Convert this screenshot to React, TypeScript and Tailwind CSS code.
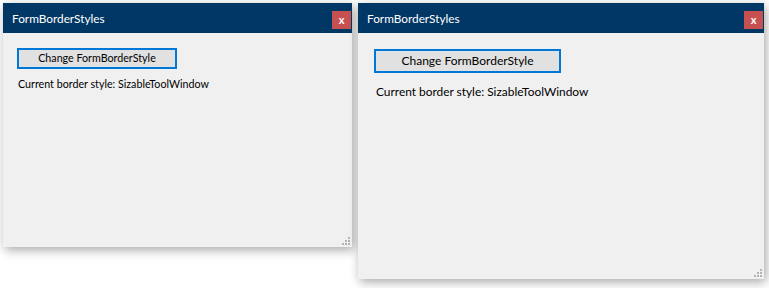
const font = { fontFamily: '"Segoe UI", Lato, "Noto Sans", sans-serif' };

type WinProps = {
  width: string;
  height: string;
  large?: boolean;
};

const Grip = () => (
  <div className="grid grid-cols-3 gap-px w-[8px] h-[8px]">
    <span />
    <span />
    <span className="bg-[#b4b4b4]" />
    <span />
    <span className="bg-[#b4b4b4]" />
    <span className="bg-[#b4b4b4]" />
    <span className="bg-[#b4b4b4]" />
    <span className="bg-[#b4b4b4]" />
    <span className="bg-[#b4b4b4]" />
  </div>
);

const ToolWindow: React.FC<WinProps> = ({ width, height, large }) => {
  return (
    <div
      className={`flex flex-col bg-[#f0f0f0] shadow-[2px_3px_10px_rgba(0,0,0,0.35)] ${width} ${height}`}
    >
      <div className="flex items-start justify-between h-[30px] bg-[#013764] pl-[9px] pr-px">
        <span className="text-white text-[11.8px] leading-[16px] mt-[8px]">FormBorderStyles</span>
        <div className="mt-[8px] w-[19px] h-[18px] bg-[#c75050] flex items-center justify-center text-white text-[11px] font-bold leading-none pb-px">
          x
        </div>
      </div>
      <div className={`flex-1 flex flex-col ${large ? "pt-[16px] pl-[16px]" : "pt-[15px] pl-[14px]"}`}>
        <button
          className={`border-2 border-[#0078d7] bg-[#e1e1e1] text-black ${
            large ? "w-[187px] h-[24px] text-[12px]" : "w-[160px] h-[21px] text-[10.7px]"
          } leading-none`}
        >
          Change FormBorderStyle
        </button>
        <p
          className={`text-black ${
            large ? "mt-[10px] ml-[2px] text-[11.9px] leading-[18px]" : "mt-[7px] ml-px text-[10.7px] leading-[16px]"
          }`}
        >
          Current border style: SizableToolWindow
        </p>
        <div className="mt-auto self-end mr-[2px] mb-[2px]">
          <Grip />
        </div>
      </div>
    </div>
  );
};

export default function App() {
  return (
    <div className="w-[769px] h-[288px] bg-white flex items-start gap-[6px] pl-[3px] pt-[3px]" style={font}>
      <ToolWindow width="w-[349px]" height="h-[244px]" />
      <ToolWindow width="w-[406px]" height="h-[276px]" large />
    </div>
  );
}
